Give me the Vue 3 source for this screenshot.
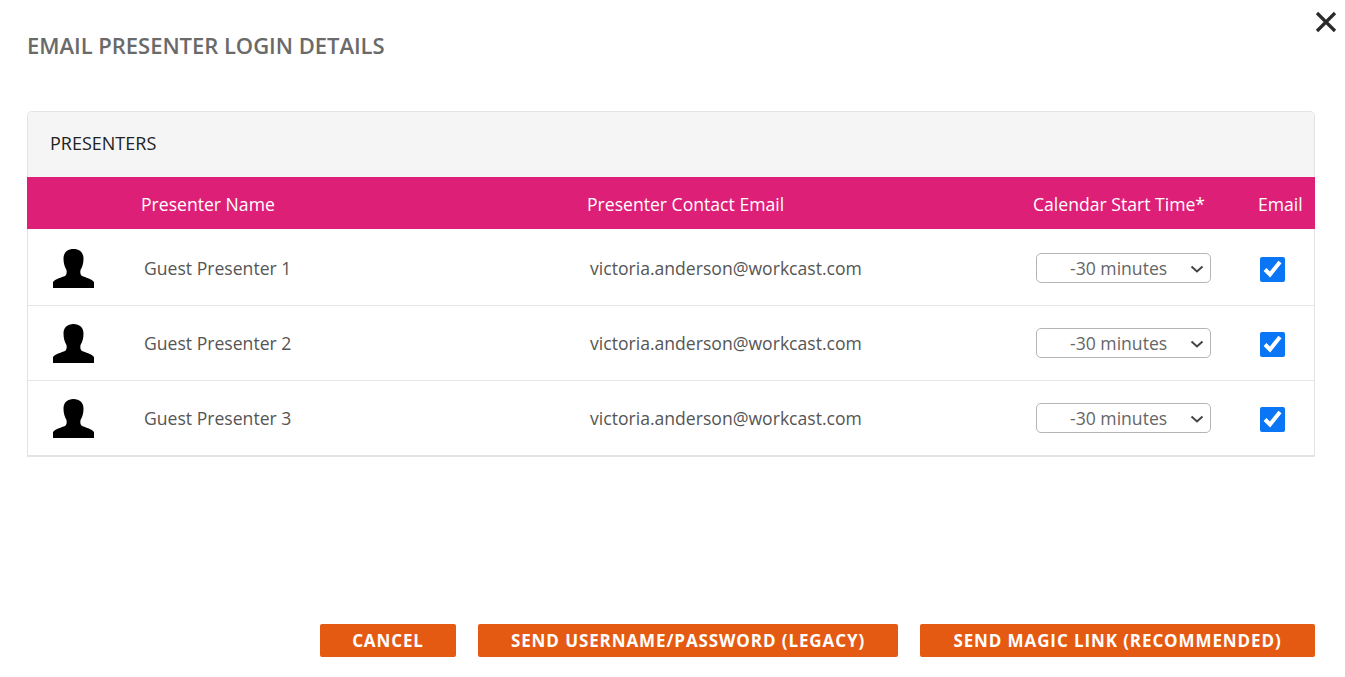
<script setup>
const presenters = [
  { name: 'Guest Presenter 1', email: 'victoria.anderson@workcast.com' },
  { name: 'Guest Presenter 2', email: 'victoria.anderson@workcast.com' },
  { name: 'Guest Presenter 3', email: 'victoria.anderson@workcast.com' },
]
</script>

<template>
  <div class="modal">
    <svg class="close" width="24" height="24" viewBox="0 0 24 24" aria-label="Close">
      <path d="M3 3 L21 21 M21 3 L3 21" stroke="#2a2a2a" stroke-width="3.2" fill="none" />
    </svg>
    <h1 class="title">EMAIL PRESENTER LOGIN DETAILS</h1>
    <section class="card">
      <h2 class="card-head">PRESENTERS</h2>
      <div class="row head">
        <span></span>
        <span>Presenter Name</span>
        <span>Presenter Contact Email</span>
        <span>Calendar Start Time*</span>
        <span>Email</span>
      </div>
      <div v-for="p in presenters" :key="p.name" class="row body">
        <svg class="avatar" width="41" height="39" viewBox="0 0 41 39">
          <path d="M20.5 0 C14.5 0 10.5 3.5 10.5 9.5 C10.5 14 11.5 18 13.5 21 C14 24 13.5 26 12 27 C8.5 28.5 3 29.5 0 33 L0 39 L41 39 L41 33 C38 29.5 32.5 28.5 29 27 C27.5 26 27 24 27.5 21 C29.5 18 30.5 14 30.5 9.5 C30.5 3.5 26.5 0 20.5 0 Z" fill="#000" />
        </svg>
        <span class="cell">{{ p.name }}</span>
        <span class="cell">{{ p.email }}</span>
        <span class="cell">
          <span class="select-wrap">
            <select class="time">
              <option>-30 minutes</option>
            </select>
            <svg class="chevron" width="14" height="8" viewBox="0 0 14 8">
              <path d="M1.5 1.5 L7 6.5 L12.5 1.5" stroke="#444" stroke-width="2" fill="none" />
            </svg>
          </span>
        </span>
        <span class="check-cell"><input class="check" type="checkbox" checked /></span>
      </div>
    </section>
    <footer class="actions">
      <button class="btn cancel">CANCEL</button>
      <button class="btn legacy">SEND USERNAME/PASSWORD (LEGACY)</button>
      <button class="btn magic">SEND MAGIC LINK (RECOMMENDED)</button>
    </footer>
  </div>
</template>

<style scoped>
.modal {
  position: relative;
  box-sizing: border-box;
  width: 1345px;
  height: 677px;
  padding: 31px 30px 0 27px;
  background: #fff;
  font-family: "Open Sans", "Liberation Sans", sans-serif;
  overflow: hidden;
}
.close {
  position: absolute;
  top: 10px;
  left: 1314px;
  filter: blur(0.7px);
}
.title {
  margin: 0 0 52px;
  font-size: 22px;
  line-height: 28px;
  font-weight: 600;
  color: #6a6a6a;
  letter-spacing: -0.03px;
}
.card {
  border: 1px solid #e3e3e3;
  border-bottom-width: 2px;
  border-radius: 5px 5px 0 0;
}
.card-head {
  margin: 0;
  height: 65px;
  padding: 0 22px 3px;
  box-sizing: border-box;
  display: flex;
  align-items: center;
  background: #f5f5f5;
  font-size: 18px;
  font-weight: 500;
  line-height: 26px;
  color: #222;
  border-radius: 5px 5px 0 0;
}
.row {
  display: grid;
  grid-template-columns: 113px 446px 446px 225px 1fr;
  align-items: center;
}
.head {
  margin: 0 -1px;
  padding: 2px 0 0 1px;
  box-sizing: border-box;
  height: 52px;
  background: #dd1f78;
  color: #fff;
  font-size: 17.6px;
  font-weight: 500;
}
.body {
  height: 75px;
  border-top: 1px solid #e6e6e6;
  box-sizing: border-box;
  color: #555;
  font-size: 17.6px;
}
.head + .body {
  height: 76px;
  padding-top: 2px;
  border-top: 0;
}
.avatar {
  display: block;
  margin: 1px 0 0 25px;
}
.cell {
  padding-left: 3px;
}
.select-wrap {
  position: relative;
  display: block;
  width: 175px;
}
.chevron {
  position: absolute;
  top: 12px;
  left: 154px;
  pointer-events: none;
}
.time {
  display: block;
  box-sizing: border-box;
  width: 175px;
  height: 30px;
  padding: 0 0 0 33px;
  border: 1px solid #b5b5b5;
  border-radius: 5px;
  background: #fff;
  color: #666;
  font: 400 17.6px "Open Sans", sans-serif;
  appearance: none;
}
.check-cell {
  display: flex;
  padding: 2px 0 0 2px;
}
.check {
  width: 25px;
  height: 25px;
  margin: 0;
  accent-color: #0a75f5;
}
.actions {
  display: flex;
  justify-content: flex-end;
  gap: 22px;
  margin-top: 167px;
}
.btn {
  box-sizing: border-box;
  height: 33px;
  padding: 0;
  border: 0;
  border-radius: 2px;
  background: #e55a13;
  color: #fff;
  font: 700 17px "Open Sans", sans-serif;
  letter-spacing: 0.9px;
}
.cancel { width: 136px; }
.legacy { width: 420px; }
.magic { width: 395px; }
</style>
